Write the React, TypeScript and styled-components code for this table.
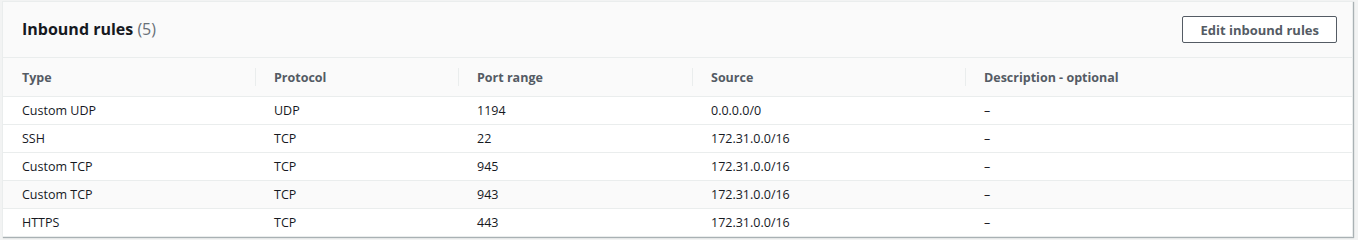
import React from 'react';
import styled, { createGlobalStyle } from 'styled-components';

const GlobalStyle = createGlobalStyle`
  body {
    margin: 0;
    background: #f2f3f3;
    font-family: "Open Sans", "Liberation Sans", sans-serif;
    color: #16191f;
  }
`;

const Page = styled.div`
  padding: 1px 5px 0 2px;
  height: 240px;
  box-sizing: border-box;
`;

const Panel = styled.div`
  background: #ffffff;
  border: 1px solid #eaeded;
  box-shadow: 1px 1px 1px 0 rgba(0, 28, 36, 0.3);
`;

const PanelHeader = styled.div`
  display: flex;
  align-items: center;
  justify-content: space-between;
  height: 55px;
  padding: 0 15px 0 19px;
  background: #fafafa;
  border-bottom: 1px solid #eaeded;
`;

const Title = styled.h2`
  margin: 0 0 2px;
  font-size: 16px;
  font-weight: 700;
  color: #16191f;
`;

const Count = styled.span`
  font-weight: 400;
  color: #687078;
`;

const Button = styled.button`
  height: 27px;
  padding: 0 17px;
  white-space: nowrap;
  background: #ffffff;
  border: 1px solid #545b64;
  border-radius: 2px;
  font-family: inherit;
  font-size: 13px;
  font-weight: 700;
  color: #545b64;
`;

const Table = styled.table`
  width: 100%;
  border-collapse: collapse;
  table-layout: fixed;
  font-size: 12.5px;
`;

const Th = styled.th<{ $w?: number; $first?: boolean }>`
  position: relative;
  width: ${(p) => (p.$w ? `${p.$w - 19}px` : 'auto')};
  height: 38px;
  padding: 0 0 0 19px;
  text-align: left;
  font-weight: 700;
  color: #545b64;
  background: #fafafa;
  border-bottom: 1px solid #eaeded;

  &::before {
    content: '';
    display: ${(p) => (p.$first ? 'none' : 'block')};
    position: absolute;
    left: 0;
    top: 10px;
    bottom: 10px;
    border-left: 1px solid #eaeded;
  }
`;

const Tr = styled.tr<{ $shade?: boolean }>`
  background: ${(p) => (p.$shade ? '#fafafa' : '#ffffff')};
`;

const Td = styled.td`
  height: 27px;
  padding: 0 0 0 19px;
  border-bottom: 1px solid #eaeded;
  color: #16191f;

  tr:last-child > & {
    border-bottom: none;
  }
`;

const rules = [
  { type: 'Custom UDP', protocol: 'UDP', port: '1194', source: '0.0.0.0/0' },
  { type: 'SSH', protocol: 'TCP', port: '22', source: '172.31.0.0/16' },
  { type: 'Custom TCP', protocol: 'TCP', port: '945', source: '172.31.0.0/16' },
  { type: 'Custom TCP', protocol: 'TCP', port: '943', source: '172.31.0.0/16' },
  { type: 'HTTPS', protocol: 'TCP', port: '443', source: '172.31.0.0/16' },
];

const App = () => {
  return (
    <Page>
      <GlobalStyle />
      <Panel>
        <PanelHeader>
          <Title>
            Inbound rules <Count>(5)</Count>
          </Title>
          <Button>Edit inbound rules</Button>
        </PanelHeader>
        <Table>
          <thead>
            <tr>
              <Th $w={252} $first>Type</Th>
              <Th $w={203}>Protocol</Th>
              <Th $w={234}>Port range</Th>
              <Th $w={273}>Source</Th>
              <Th>Description - optional</Th>
            </tr>
          </thead>
          <tbody>
            {rules.map((r, i) => (
              <Tr key={i} $shade={i === 3}>
                <Td>{r.type}</Td>
                <Td>{r.protocol}</Td>
                <Td>{r.port}</Td>
                <Td>{r.source}</Td>
                <Td>–</Td>
              </Tr>
            ))}
          </tbody>
        </Table>
      </Panel>
    </Page>
  );
};

export default App;
